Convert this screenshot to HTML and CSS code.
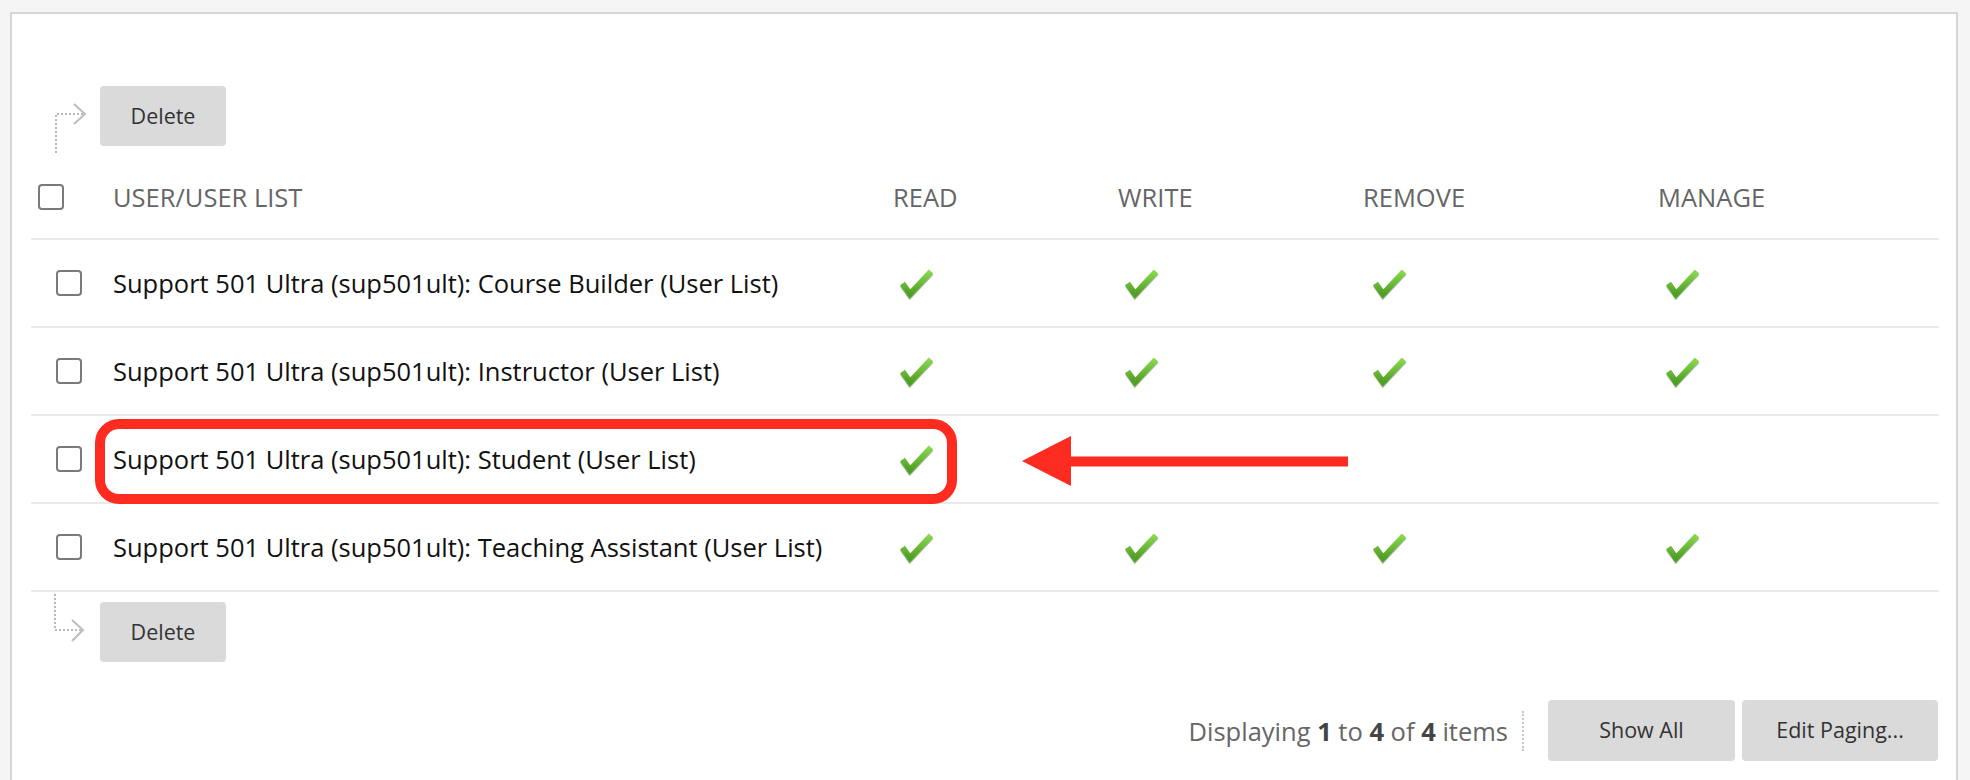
FILE: index.html
```html
<!DOCTYPE html>
<html lang="en">
<head>
<meta charset="utf-8">
<title>Permissions</title>
<link rel="stylesheet" href="styles.css">
</head>
<body>
<div class="page">
  <div class="panel">
    <div class="action-bar action-top">
      <svg class="flow-icon flow-top" width="40" height="56" viewBox="0 0 40 56">
        <path d="M6 53 V14 H34" fill="none" stroke="#b9b9b9" stroke-width="2" stroke-dasharray="2 2"/>
        <path d="M24 4 L35 14 L24 24" fill="none" stroke="#bdbdbd" stroke-width="2"/>
      </svg>
      <button class="btn btn-delete">Delete</button>
    </div>

    <div class="table">
      <div class="row head">
        <div class="cell cb-cell head-cb"><span class="checkbox"></span></div>
        <div class="cell">User/User List</div>
        <div class="cell">Read</div>
        <div class="cell">Write</div>
        <div class="cell">Remove</div>
        <div class="cell">Manage</div>
      </div>

      <div class="row">
        <div class="cell cb-cell"><span class="checkbox"></span></div>
        <div class="cell name">Support 501 Ultra (sup501ult): Course Builder (User List)</div>
        <div class="cell"><svg class="check" viewBox="0 0 38 34"><use href="#chk"/></svg></div>
        <div class="cell"><svg class="check" viewBox="0 0 38 34"><use href="#chk"/></svg></div>
        <div class="cell"><svg class="check c3" viewBox="0 0 38 34"><use href="#chk"/></svg></div>
        <div class="cell"><svg class="check c4" viewBox="0 0 38 34"><use href="#chk"/></svg></div>
      </div>

      <div class="row">
        <div class="cell cb-cell"><span class="checkbox"></span></div>
        <div class="cell name">Support 501 Ultra (sup501ult): Instructor (User List)</div>
        <div class="cell"><svg class="check" viewBox="0 0 38 34"><use href="#chk"/></svg></div>
        <div class="cell"><svg class="check" viewBox="0 0 38 34"><use href="#chk"/></svg></div>
        <div class="cell"><svg class="check c3" viewBox="0 0 38 34"><use href="#chk"/></svg></div>
        <div class="cell"><svg class="check c4" viewBox="0 0 38 34"><use href="#chk"/></svg></div>
      </div>

      <div class="row">
        <div class="cell cb-cell"><span class="checkbox"></span></div>
        <div class="cell name">Support 501 Ultra (sup501ult): Student (User List)</div>
        <div class="cell"><svg class="check" viewBox="0 0 38 34"><use href="#chk"/></svg></div>
        <div class="cell"></div>
        <div class="cell"></div>
        <div class="cell"></div>
      </div>

      <div class="row">
        <div class="cell cb-cell"><span class="checkbox"></span></div>
        <div class="cell name">Support 501 Ultra (sup501ult): Teaching Assistant (User List)</div>
        <div class="cell"><svg class="check" viewBox="0 0 38 34"><use href="#chk"/></svg></div>
        <div class="cell"><svg class="check" viewBox="0 0 38 34"><use href="#chk"/></svg></div>
        <div class="cell"><svg class="check c3" viewBox="0 0 38 34"><use href="#chk"/></svg></div>
        <div class="cell"><svg class="check c4" viewBox="0 0 38 34"><use href="#chk"/></svg></div>
      </div>
    </div>

    <div class="action-bar action-bottom">
      <svg class="flow-icon flow-bottom" width="40" height="52" viewBox="0 0 40 52">
        <path d="M7 2 V38 H34" fill="none" stroke="#b9b9b9" stroke-width="2" stroke-dasharray="2 2"/>
        <path d="M24 28 L35 38 L24 49" fill="none" stroke="#bdbdbd" stroke-width="2"/>
      </svg>
      <button class="btn btn-delete">Delete</button>
    </div>

    <div class="paging">
      <span class="paging-text">Displaying <b>1</b> to <b>4</b> of <b>4</b> items</span>
      <span class="paging-sep"></span>
      <button class="btn btn-showall">Show All</button>
      <button class="btn btn-editpaging">Edit Paging...</button>
    </div>
  </div>

  <div class="callout-box"></div>
  <svg class="callout-arrow" width="332" height="54" viewBox="0 0 332 54">
    <polygon points="2,27 51,2 51,52" fill="#fd2b20"/>
    <rect x="50" y="22.5" width="278" height="10" fill="#fd2b20"/>
  </svg>
</div>

<svg width="0" height="0" class="defs">
  <defs>
    <linearGradient id="chkGrad" x1="0" y1="0" x2="0" y2="1">
      <stop offset="0" stop-color="#8ad94f"/>
      <stop offset="1" stop-color="#4f9e24"/>
    </linearGradient>
    <g id="chk">
      <polyline points="5.5,19 13,29.5 34,7" fill="none" stroke="#2f6a14" stroke-opacity="0.45" stroke-width="6"/>
      <polyline points="5.5,17.5 13,28 34,5.5" fill="none" stroke="url(#chkGrad)" stroke-width="6" stroke-linejoin="miter"/>
    </g>
  </defs>
</svg>
</body>
</html>
```

FILE: styles.css
```css
html, body {
  margin: 0;
  padding: 0;
  overflow: hidden;
  background: #f5f5f5;
  font-family: "Open Sans", "Noto Sans", sans-serif;
}

.page {
  position: relative;
  width: 1970px;
  height: 780px;
  padding-top: 12px;
  box-sizing: border-box;
}

.panel {
  margin: 0 12px 0 10px;
  border: 2px solid #d6d6d6;
  background: #ffffff;
  height: 820px;
  padding-top: 72px;
  box-sizing: border-box;
}

.action-bar {
  display: flex;
  align-items: flex-start;
  height: 70px;
}

.flow-top {
  margin-left: 38px;
  margin-top: 14px;
  margin-right: 10px;
}

.flow-bottom {
  margin-left: 36px;
  margin-top: 0;
  margin-right: 12px;
}

.action-bottom .btn-delete {
  margin-top: 10px;
}

.btn {
  font-family: "Open Sans", "Noto Sans", sans-serif;
  font-size: 21.5px;
  color: #333333;
  background: #dadada;
  border: none;
  border-radius: 4px;
  padding: 0 0 2px 0;
  display: flex;
  align-items: center;
  justify-content: center;
}

.btn-delete {
  width: 126px;
  height: 60px;
}

.table {
  margin: 0 17px 0 19px;
}

.row {
  display: grid;
  grid-template-columns: 82px 780px 225px 245px 295px 1fr;
  height: 88px;
  border-bottom: 2px solid #e9e9e9;
  box-sizing: border-box;
  align-items: center;
}

.row.head {
  height: 84px;
}

.cell {
  display: flex;
  align-items: center;
  font-size: 25.5px;
  color: #111111;
  white-space: nowrap;
}

.head .cell {
  color: #666666;
  text-transform: uppercase;
  font-size: 25.5px;
}

.cb-cell {
  padding-left: 25px;
}

.head-cb {
  padding-left: 7px;
}

.checkbox {
  display: block;
  width: 26px;
  height: 26px;
  border: 2px solid #7a7a7a;
  border-radius: 4px;
  box-sizing: border-box;
  background: #ffffff;
}

.check {
  width: 38px;
  height: 34px;
  margin-left: 4px;
}

.check.c3 {
  margin-left: 7px;
}

.check.c4 {
  margin-left: 5px;
}

.paging {
  display: flex;
  justify-content: flex-end;
  align-items: center;
  margin: 38px 18px 0 0;
}

.paging-text {
  font-size: 25.5px;
  color: #666666;
  margin-right: 14px;
}

.paging-text b {
  color: #444444;
  font-weight: 700;
}

.paging-sep {
  width: 0;
  height: 40px;
  border-left: 2px dotted #c8c8c8;
  margin-right: 24px;
}

.btn-showall {
  width: 187px;
  height: 61px;
  margin-right: 7px;
}

.btn-editpaging {
  width: 196px;
  height: 61px;
}

.callout-box {
  position: absolute;
  left: 95px;
  top: 419px;
  width: 862px;
  height: 85px;
  border: 10px solid #fd2b20;
  border-radius: 24px;
  box-sizing: border-box;
}

.callout-arrow {
  position: absolute;
  left: 1020px;
  top: 434px;
}

.defs {
  position: absolute;
  width: 0;
  height: 0;
}
```
